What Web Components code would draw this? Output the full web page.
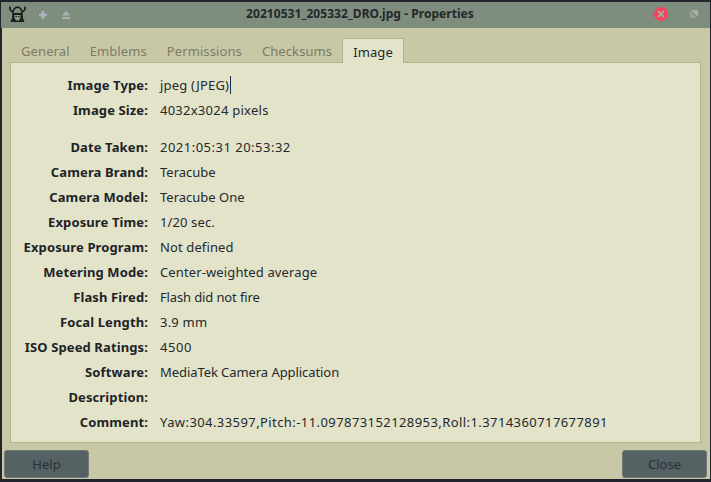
<!DOCTYPE html>
<html><head><meta charset="utf-8">
<style>
html,body{margin:0;padding:0;width:711px;height:482px;overflow:hidden;background:#23252e}
body{font-family:"Noto Sans",sans-serif;font-size:13px}
</style></head><body>
<props-window>
  <title-bar slot="title">20210531_205332_DRO.jpg - Properties</title-bar>
  <tab-strip slot="tabs"><tab-item>General</tab-item><tab-item>Emblems</tab-item><tab-item>Permissions</tab-item><tab-item>Checksums</tab-item><tab-item active>Image</tab-item></tab-strip>
  <info-panel slot="panel">
    <info-row ls=".18" label="Image Type:"><span>jpeg (JPEG)<text-caret></text-caret></span></info-row>
    <info-row ls=".25" label="Image Size:">4032x3024 pixels</info-row>
    <info-row ls=".49" gap label="Date Taken:">2021:05:31 20:53:32</info-row>
    <info-row label="Camera Brand:">Teracube</info-row>
    <info-row label="Camera Model:">Teracube One</info-row>
    <info-row ls=".12" label="Exposure Time:">1/20 sec.</info-row>
    <info-row ls=".12" label="Exposure Program:">Not defined</info-row>
    <info-row ls=".12" label="Metering Mode:">Center-weighted average</info-row>
    <info-row ls="-.13" label="Flash Fired:">Flash did not fire</info-row>
    <info-row ls=".2" label="Focal Length:">3.9 mm</info-row>
    <info-row ls=".56" label="ISO Speed Ratings:">4500</info-row>
    <info-row ls="-.07" label="Software:">MediaTek Camera Application</info-row>
    <info-row label="Description:"></info-row>
    <info-row ls=".42" label="Comment:">Yaw:304.33597,Pitch:-11.097873152128953,Roll:1.3714360717677891</info-row>
  </info-panel>
  <dlg-button slot="actions">Help</dlg-button>
  <dlg-button slot="actions">Close</dlg-button>
</props-window>
<script>
function def(name,html,init){customElements.define(name,class extends HTMLElement{connectedCallback(){if(this.shadowRoot)return;const r=this.attachShadow({mode:'open'});r.innerHTML=html;if(init)init(this,r);}});}
def('props-window',`<style>
:host{display:flex;flex-direction:column;box-sizing:border-box;width:711px;height:482px;padding-top:2px;padding-bottom:3px;background:#23252e}
.body{flex:1;display:flex;flex-direction:column;margin:0 1px 0 2px;background:#c8c8a6;padding:10px 9px 1px 8px;min-height:0}
.foot{display:flex;justify-content:space-between;margin:7px -6px 0 -6px;}
</style><slot name="title"></slot><div class="body"><slot name="tabs"></slot><slot name="panel"></slot><div class="foot"><slot name="actions"></slot></div></div>`);
def('title-bar',`<style>
:host{display:block;position:relative;height:26px;background:#7f8d7f;color:#23282a;margin:0 1px 0 1px}
.t{display:flex;align-items:center;justify-content:center;height:100%;box-sizing:border-box;font-weight:700;font-size:12px;padding:0 0 3px 9px;letter-spacing:.05px}
svg{position:absolute}
</style>
<svg style="left:8px;top:4px" width="18" height="18" viewBox="0 0 18 18"><path d="M1 .5C.5 3 1.5 5 4 6M16 .5C16.5 3 15.5 5 13 6" fill="none" stroke="#1c1e1b" stroke-width="1.6"/><path d="M4 7.5C4 3.5 6 1.5 8.5 1C11 1.5 13 3.5 13 7.5" fill="none" stroke="#1c1e1b" stroke-width="1.5"/><path d="M3.5 7H13.5L14 12L15.5 16H1.5L3 12Z" fill="#1c1e1b"/><path d="M5.5 9H11.5V12L10 14.5H7L5.5 12Z" fill="#8b968a"/><path d="M6.5 10.5H8M9 10.5H10.5" stroke="#1c1e1b"/></svg>
<svg style="left:37px;top:8px" width="10" height="10" viewBox="0 0 10 10"><path d="M3.7 1H6.2V3.7H9V6.2H6.2V9H3.7V6.2H1V3.7H3.7Z" fill="#a9b3b9"/></svg>
<svg style="left:60px;top:8px" width="10" height="10" viewBox="0 0 10 10"><path d="M5 1L9 5.5H1Z M1 7H9V9H1Z" fill="#a9b3b9"/></svg>
<div class="t"><slot></slot></div>
<svg style="left:652px;top:5px" width="16" height="16" viewBox="0 0 16 16"><circle cx="8" cy="7" r="7" fill="#f5455c"/><path d="M5.6 4.6L10.4 9.4M10.4 4.6L5.6 9.4" stroke="#a9a5a0" stroke-width="2" stroke-linecap="round"/></svg>
<svg style="left:689px;top:8px" width="8" height="8" viewBox="0 0 8 8"><path d="M1 0H8V7Z" fill="#a8b0ac"/><path d="M0 1V8H7Z" fill="#98a39e"/></svg>`);
def('tab-strip',`<style>:host{display:flex;height:25px;padding-left:1px;align-items:stretch;box-sizing:border-box;margin-bottom:-1px;position:relative;z-index:1}</style><slot></slot>`);
def('tab-item',`<style>
:host{display:flex;align-items:center;box-sizing:border-box;padding:1px 10px 0;color:#7c7c66;font-size:13px;letter-spacing:.1px;height:24px;}
:host([active]){background:#e3e3c9;color:#1f2a30;border:1px solid #b5b58d;border-bottom:0;padding:1px 10px 0;height:25px;}
</style><slot></slot>`);
def('info-panel',`<style>:host{display:block;flex:1;box-sizing:border-box;background:#e3e3c9;border:1px solid #b5b58d;padding:10px 0 0 0;min-height:0;color:#23292e}</style><slot></slot>`);
def('info-row',`<style>
:host{display:grid;grid-template-columns:137px 1fr;column-gap:12px;height:25px;line-height:25px;white-space:nowrap;font-size:13px}
:host([gap]){margin-top:12px}
.l{font-weight:700;text-align:right;letter-spacing:.12px;color:#1d2327}
</style><div class="l"></div><div class="v"><slot></slot></div>`,(h,r)=>{r.querySelector('.l').textContent=h.getAttribute('label');r.querySelector('.v').style.letterSpacing=(h.getAttribute('ls')||0)+'px'});
def('text-caret',`<style>:host{display:inline-block;width:1px;height:18px;background:#1d2a50;vertical-align:-4px;margin-left:1px}</style>`);
def('dlg-button',`<style>
:host{display:flex;align-items:center;justify-content:center;box-sizing:border-box;width:85px;height:28px;background:#566164;border:1px solid #6d7a78;border-radius:3px;color:#2a3238;font-size:13px}
</style><slot></slot>`);
</script></body></html>
